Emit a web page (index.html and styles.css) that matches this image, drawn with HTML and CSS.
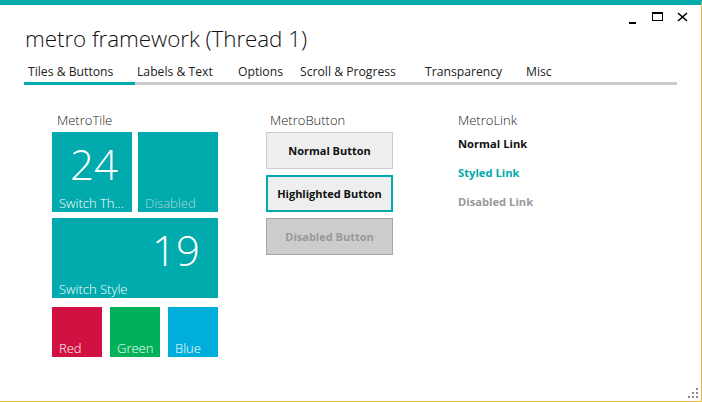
FILE: index.html
```html
<!DOCTYPE html>
<html>
<head>
<meta charset="utf-8">
<link rel="stylesheet" href="styles.css">
</head>
<body>
<div class="window">
  <div class="header">
    <h1 class="title">metro framework (Thread 1)</h1>
    <div class="controls">
      <span class="ctl ctl-min"></span>
      <span class="ctl ctl-max"></span>
      <svg class="ctl-close" width="11" height="10" viewBox="0 0 11 10"><path d="M1 1 L10 9 M10 1 L1 9" stroke="#000" stroke-width="1.6" fill="none"/></svg>
    </div>
  </div>
  <div class="tabs">
    <div class="tab tab-1 active">Tiles &amp; Buttons</div>
    <div class="tab tab-2">Labels &amp; Text</div>
    <div class="tab tab-3">Options</div>
    <div class="tab tab-4">Scroll &amp; Progress</div>
    <div class="tab tab-5">Transparency</div>
    <div class="tab tab-6">Misc</div>
  </div>
  <div class="content">
    <div class="col col-tiles">
      <div class="label">MetroTile</div>
      <div class="tile-grid">
        <div class="tile tile-sq">
          <span class="count">24</span>
          <span class="tile-text">Switch Th...</span>
        </div>
        <div class="tile tile-sq tile-disabled">
          <span class="tile-text">Disabled</span>
        </div>
        <div class="tile tile-wide">
          <span class="count count-wide">19</span>
          <span class="tile-text">Switch Style</span>
        </div>
      </div>
      <div class="small-tiles">
        <div class="tile tile-small red"><span class="tile-text">Red</span></div>
        <div class="tile tile-small green"><span class="tile-text">Green</span></div>
        <div class="tile tile-small blue"><span class="tile-text">Blue</span></div>
      </div>
    </div>
    <div class="col col-buttons">
      <div class="label">MetroButton</div>
      <div class="buttons">
        <div class="btn">Normal Button</div>
        <div class="btn btn-hl">Highlighted Button</div>
        <div class="btn btn-dis">Disabled Button</div>
      </div>
    </div>
    <div class="col col-links">
      <div class="label">MetroLink</div>
      <div class="links">
        <div class="link">Normal Link</div>
        <div class="link link-styled">Styled Link</div>
        <div class="link link-dis">Disabled Link</div>
      </div>
    </div>
  </div>
  <div class="grip">
    <i></i>
  </div>
</div>
</body>
</html>
```
FILE: styles.css
```css
* { box-sizing: border-box; }
html, body { margin: 0; padding: 0; background: #fff; }
body { font-family: "Open Sans", "Noto Sans", sans-serif; color: #000; }

.window {
  position: relative;
  width: 702px;
  height: 402px;
  background: #fff;
  border-top: 5px solid #00aaad;
  border-right: 1px solid #ebb53e;
  border-bottom: 1px solid #ebb53e;
  overflow: hidden;
}

.header {
  display: flex;
  justify-content: space-between;
  align-items: flex-start;
  height: 56px;
}
.title {
  margin: 19px 0 0 25px;
  font-size: 22.4px;
  font-weight: 300;
  line-height: 30px;
  color: #111;
  letter-spacing: -0.05px;
}
.controls {
  display: flex;
  align-items: flex-start;
  margin: 6px 13px 0 0;
}
.ctl { display: block; }
.ctl-min {
  width: 7px;
  height: 2px;
  background: #000;
  margin: 11px 16px 0 0;
}
.ctl-max {
  width: 11px;
  height: 9px;
  border: 1px solid #000;
  border-top-width: 2px;
  margin: 1px 14px 0 0;
}
.ctl-close { display: block; margin-top: 1px; }

.tabs {
  display: flex;
  margin-left: 24px;
  width: 653px;
  border-bottom: 3px solid #cccccc;
  height: 24px;
}
.tab {
  font-size: 12.2px;
  line-height: 22px;
  color: #222;
  padding-left: 2px;
  white-space: nowrap;
}
.tab.active { border-bottom: 3px solid #00aaad; margin-bottom: -3px; height: 24px; }
.tab-1 { width: 111px; padding-left: 4px; }
.tab-2 { width: 101px; }
.tab-3 { width: 62px; }
.tab-4 { width: 125px; }
.tab-5 { width: 101px; }
.tab-6 { width: 60px; }

.content {
  display: flex;
  padding-top: 25px;
}
.label {
  font-size: 13px;
  font-weight: 300;
  color: #222;
  line-height: 20px;
  height: 22px;
}
.col-tiles { margin-left: 52px; width: 166px; }
.col-tiles .label { padding-left: 5px; }
.col-buttons { margin-left: 48px; width: 127px; }
.col-buttons .label { padding-left: 4px; }
.col-links { margin-left: 65px; }

.tile-grid {
  display: grid;
  grid-template-columns: 80px 80px;
  grid-auto-rows: 80px;
  gap: 6px;
}
.tile {
  position: relative;
  background: #00aaad;
  color: #fff;
  display: flex;
  flex-direction: column;
  justify-content: flex-end;
  padding: 0 4px 0 7px;
  overflow: hidden;
}
.tile-wide { grid-column: span 2; }
.count {
  position: absolute;
  top: 4px;
  right: 14px;
  font-size: 42px;
  font-weight: 300;
  line-height: 56px;
}
.count-wide { right: 18px; }
.tile-text {
  font-size: 13px;
  font-weight: 300;
  line-height: 17px;
  white-space: nowrap;
}
.tile-disabled .tile-text { color: #b3d9d9; }

.small-tiles {
  display: flex;
  gap: 8px;
  margin-top: 9px;
}
.tile-small { width: 50px; height: 50px; }
.red { background: #d11141; }
.green { background: #00b159; }
.blue { background: #00aedb; }

.buttons { display: flex; flex-direction: column; gap: 6px; }
.btn {
  height: 37px;
  background: #eeeeee;
  border: 1px solid #cccccc;
  display: flex;
  align-items: center;
  justify-content: center;
  font-size: 11px;
  font-weight: 700;
  color: #111;
}
.btn-hl { border: 2px solid #00aaad; }
.btn-dis { background: #cccccc; border-color: #a6a6a6; color: #999999; }

.links { padding-top: 4px; }
.link {
  font-size: 11.2px;
  font-weight: 700;
  color: #111;
  line-height: 16px;
  height: 29px;
}
.link-styled { color: #00aaad; }
.link-dis { color: #999999; }

.grip {
  position: absolute;
  right: 3px;
  bottom: 3px;
  width: 10px;
  height: 10px;
}
.grip i {
  position: absolute;
  width: 2px; height: 2px;
  background: #8a8a8a;
  right: 0; bottom: 0;
  box-shadow: 0 -4px 0 #8a8a8a, 0 -8px 0 #8a8a8a, -4px 0 0 #8a8a8a, -4px -4px 0 #8a8a8a, -8px 0 0 #8a8a8a;
}
```
